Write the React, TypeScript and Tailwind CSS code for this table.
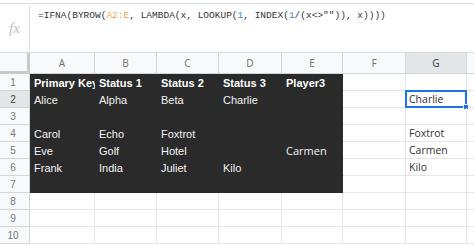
import React from "react";

const cols = [
  { key: "A", w: "w-[65px]" },
  { key: "B", w: "w-[62px]" },
  { key: "C", w: "w-[62px]" },
  { key: "D", w: "w-[63px]" },
  { key: "E", w: "w-[61px]" },
  { key: "F", w: "w-[63px]" },
  { key: "G", w: "w-[61px]" },
];

type Cell = { v: string; alt?: boolean };

// values for A..E (the dark block) and G (formula output)
const rows: { data: Cell[]; out?: string }[] = [
  { data: [{ v: "Primary Key" }, { v: "Status 1" }, { v: "Status 2" }, { v: "Status 3" }, { v: "Player3" }] },
  { data: [{ v: "Alice" }, { v: "Alpha" }, { v: "Beta" }, { v: "Charlie" }, { v: "" }], out: "Charlie" },
  { data: [{ v: "" }, { v: "" }, { v: "" }, { v: "" }, { v: "" }] },
  { data: [{ v: "Carol" }, { v: "Echo" }, { v: "Foxtrot" }, { v: "" }, { v: "" }], out: "Foxtrot" },
  { data: [{ v: "Eve" }, { v: "Golf" }, { v: "Hotel" }, { v: "" }, { v: "Carmen", alt: true }], out: "Carmen" },
  { data: [{ v: "Frank" }, { v: "India" }, { v: "Juliet" }, { v: "Kilo" }, { v: "" }], out: "Kilo" },
  { data: [{ v: "" }, { v: "" }, { v: "" }, { v: "" }, { v: "" }] },
];

const SELECTED_ROW = 2;

function FormulaBar() {
  return (
    <div className="pt-[3px] bg-white">
      <div className="flex h-[50px] border-y border-[#dadce0] bg-white">
        <div className="my-[2px] flex w-[30px] shrink-0 items-center justify-center border-r border-[#dadce0]">
          <span className="font-['Liberation_Serif',serif] text-[15px] italic text-[#c0c0c0]">fx</span>
        </div>
        <div className="pl-[8px] pt-[6px] font-['Liberation_Mono',monospace] text-[9.5px] leading-[12px] whitespace-pre text-[#333]">
          =IFNA(BYROW(<span className="text-[#f0a24a]">A2:E</span>, LAMBDA(x, LOOKUP(
          <span className="text-[#3d85c6]">1</span>, INDEX(<span className="text-[#3d85c6]">1</span>/(x&lt;&gt;"")), x))))
        </div>
      </div>
    </div>
  );
}

function ColumnHeaders() {
  return (
    <div className="flex h-[21px]">
      <div className="w-[30px] shrink-0 border-r-[3px] border-b-[3px] border-[#c7c9cc] bg-[#f8f9fa]" />
      {cols.map((c) => (
        <div
          key={c.key}
          className={`${c.w} shrink-0 flex items-center justify-center border-r border-b border-[#d3d5d8] text-[10px] ${
            c.key === "G" ? "bg-[#e3e5e8] text-[#444]" : "bg-[#f8f9fa] text-[#777]"
          }`}
        >
          {c.key}
        </div>
      ))}
      <div className="flex-1 border-b border-[#d3d5d8] bg-[#f8f9fa]" />
    </div>
  );
}

function RowHeader({ n }: { n: number }) {
  return (
    <div
      className={`flex w-[30px] shrink-0 items-center justify-center border-r border-b border-[#d3d5d8] pr-[3px] text-[10px] ${
        n === SELECTED_ROW ? "bg-[#e3e5e8] text-[#444]" : "bg-[#f8f9fa] text-[#777]"
      }`}
    >
      {n}
    </div>
  );
}

function Grid() {
  const all = Array.from({ length: 10 }, (_, i) => rows[i]);
  return (
    <div className="font-['Liberation_Sans',Arial,sans-serif]">
      {all.map((r, i) => {
        const n = i + 1;
        return (
          <div key={n} className="flex h-[17px]">
            <RowHeader n={n} />
            {cols.slice(0, 5).map((c, ci) => {
              const cell = r?.data[ci];
              if (!r) {
                return <div key={c.key} className={`${c.w} shrink-0 border-r border-b border-[#e6e6e6]`} />;
              }
              return (
                <div
                  key={c.key}
                  className={`${c.w} shrink-0 flex items-center overflow-hidden whitespace-nowrap bg-[#2a2a2a] pl-[4px] pt-[1px] ${
                    n === 1 ? "font-bold text-[11px] text-white" : "text-[11px] text-[#f2f2f2]"
                  } ${cell?.alt ? "font-['Open_Sans',sans-serif] text-[10.5px] text-[#e6e6e6]" : ""}`}
                >
                  {cell?.v}
                </div>
              );
            })}
            <div className="w-[63px] shrink-0 border-r border-b border-[#e6e6e6]" />
            <div className="relative flex w-[61px] shrink-0 items-center border-r border-b border-[#e6e6e6] pl-[3px] pt-[1px] font-['Open_Sans',sans-serif] text-[10.5px] text-[#333]">
              {r?.out}
              {n === SELECTED_ROW ? (
                <div className="absolute -left-px -top-px -right-px -bottom-px border-2 border-[#1a73e8]">
                  <div className="absolute -right-[4px] -bottom-[4px] h-[6px] w-[6px] border border-white bg-[#1a73e8]" />
                </div>
              ) : null}
            </div>
            <div className="flex-1 border-b border-[#e6e6e6]" />
          </div>
        );
      })}
    </div>
  );
}

export default function App() {
  return (
    <div className="h-[245px] w-[474px] overflow-hidden bg-white">
      <FormulaBar />
      <ColumnHeaders />
      <Grid />
    </div>
  );
}
